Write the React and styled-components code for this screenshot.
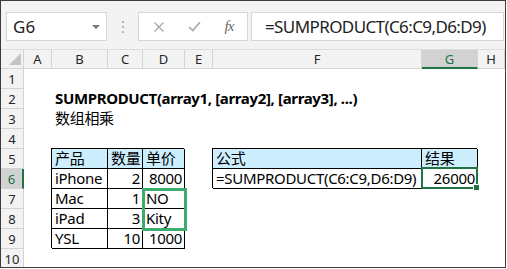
import React from "react";
import styled, { createGlobalStyle } from "styled-components";

const GlobalStyle = createGlobalStyle`
  html, body {
    margin: 0;
    padding: 0;
    background: #fff;
  }
  body {
    font-family: "Noto Sans", "Noto Sans CJK SC", sans-serif;
  }
`;

const Window = styled.div`
  width: 506px;
  height: 268px;
  box-sizing: border-box;
  border: 1px solid #3c3c3c;
  overflow: hidden;
  display: flex;
  flex-direction: column;
  background: #fff;
`;

const Toolbar = styled.div`
  height: 49px;
  flex-shrink: 0;
  box-sizing: border-box;
  background: #f3f3f3;
  border-bottom: 1px solid #dcdcdc;
  display: flex;
  align-items: flex-start;
  padding: 11px 0 0 5px;
`;

const NameBox = styled.div`
  width: 101px;
  height: 29px;
  box-sizing: border-box;
  border: 1px solid #d6d6d6;
  background: #fff;
  display: flex;
  align-items: center;
  justify-content: space-between;
  padding: 0 6px;
  font-size: 17px;
  color: #222;
`;

const Caret = styled.span`
  width: 0;
  height: 0;
  border-left: 4px solid transparent;
  border-right: 4px solid transparent;
  border-top: 4px solid #777;
`;

const Grip = styled.div`
  width: 31px;
  height: 29px;
  display: flex;
  flex-direction: column;
  align-items: center;
  justify-content: center;
  gap: 3px;
`;

const Dot = styled.span`
  width: 2px;
  height: 2px;
  background: #b4b4b4;
`;

const ButtonBox = styled.div`
  width: 110px;
  height: 29px;
  box-sizing: border-box;
  border: 1px solid #d6d6d6;
  background: #fff;
  display: grid;
  grid-template-columns: 36px 34px 1fr;
  align-items: center;
  justify-items: center;
  padding-left: 2px;
`;

const Fx = styled.span`
  font-family: "Liberation Serif", serif;
  font-style: italic;
  font-size: 15px;
  color: #6a6a6a;
  letter-spacing: -1px;
`;

const FormulaBox = styled.div`
  width: 253px;
  height: 29px;
  margin-left: 3px;
  box-sizing: border-box;
  border: 1px solid #d6d6d6;
  background: #fff;
  display: flex;
  align-items: center;
  padding-left: 13px;
  font-size: 17px;
  letter-spacing: -0.6px;
  color: #222;
  white-space: nowrap;
  overflow: hidden;
`;

const Sheet = styled.div`
  position: relative;
  display: grid;
  grid-template-columns: 23px 28px 56px 35px 42px 28px 209px 56px 1fr;
  grid-template-rows: 19px repeat(10, 20px);
`;

const HeadCell = styled.div`
  box-sizing: border-box;
  background: ${(p) => (p.$active ? "#d2d2d2" : "#f3f3f3")};
  color: ${(p) => (p.$active ? "#217346" : "#262626")};
  border-right: ${(p) => (p.$activeRow ? "2px solid #217346" : "1px solid #d4d4d4")};
  border-bottom: ${(p) => (p.$activeCol ? "2px solid #217346" : "1px solid #d4d4d4")};
  display: flex;
  align-items: center;
  justify-content: center;
  font-size: 13px;
  position: relative;
`;

const Corner = styled(HeadCell)`
  align-items: flex-end;
  justify-content: flex-end;
  padding: 0 2px 3px 0;
`;

const Cell = styled.div`
  box-sizing: border-box;
  border-right: 1px solid ${(p) => (p.$boxed ? "#000" : "transparent")};
  border-bottom: 1px solid ${(p) => (p.$boxed ? "#000" : "transparent")};
  box-shadow: ${(p) => (p.$boxed ? "-1px -1px 0 0 #000" : "none")};
  background: ${(p) => (p.$fill ? "#cdeefd" : "transparent")};
  display: flex;
  align-items: flex-end;
  justify-content: ${(p) => (p.$right ? "flex-end" : "flex-start")};
  padding: 0 ${(p) => (p.$right ? "2px" : "0")} 0 3px;
  font-size: 15px;
  letter-spacing: ${(p) => (p.$bold ? "-0.35px" : "-0.3px")};
  font-weight: ${(p) => (p.$bold ? 700 : 400)};
  line-height: 19px;
  color: #000;
  white-space: nowrap;
  overflow: visible;
`;

const Selection = styled.div`
  position: absolute;
  box-sizing: border-box;
  border: ${(p) => p.$w}px solid ${(p) => p.$color};
  pointer-events: none;
`;

const Handle = styled.span`
  position: absolute;
  right: -4px;
  bottom: -4px;
  width: 5px;
  height: 5px;
  background: #217346;
  border: 1px solid #fff;
`;

const cols = ["A", "B", "C", "D", "E", "F", "G", "H"];

const cells = {
  B2: { text: "SUMPRODUCT(array1, [array2], [array3], ...)", bold: true },
  B3: { text: "数组相乘" },
  B5: { text: "产品", boxed: true, fill: true },
  C5: { text: "数量", boxed: true, fill: true },
  D5: { text: "单价", boxed: true, fill: true },
  F5: { text: "公式", boxed: true, fill: true },
  G5: { text: "结果", boxed: true, fill: true },
  B6: { text: "iPhone", boxed: true },
  C6: { text: "2", boxed: true, right: true },
  D6: { text: "8000", boxed: true, right: true },
  F6: { text: "=SUMPRODUCT(C6:C9,D6:D9)", boxed: true },
  G6: { text: "26000", boxed: true, right: true },
  B7: { text: "Mac", boxed: true },
  C7: { text: "1", boxed: true, right: true },
  D7: { text: "NO", boxed: true },
  B8: { text: "iPad", boxed: true },
  C8: { text: "3", boxed: true, right: true },
  D8: { text: "Kity", boxed: true },
  B9: { text: "YSL", boxed: true },
  C9: { text: "10", boxed: true, right: true },
  D9: { text: "1000", boxed: true, right: true },
};

const XIcon = () => (
  <svg width="12" height="12" viewBox="0 0 12 12">
    <path d="M1.5 1.5 L10.5 10.5 M10.5 1.5 L1.5 10.5" stroke="#a8a8a8" strokeWidth="1.4" fill="none" />
  </svg>
);

const CheckIcon = () => (
  <svg width="13" height="11" viewBox="0 0 13 11">
    <path d="M1 6 L4.8 9.6 L12 1.2" stroke="#a8a8a8" strokeWidth="1.6" fill="none" />
  </svg>
);

const CornerMark = () => (
  <svg width="12" height="12" viewBox="0 0 12 12">
    <polygon points="12,0 12,12 0,12" fill="#c4c4c4" />
  </svg>
);

export default function App() {
  const rows = [];
  for (let r = 1; r <= 10; r++) {
    rows.push(
      <HeadCell key={`h${r}`} $active={r === 6} $activeRow={r === 6}>
        {r}
      </HeadCell>
    );
    cols.forEach((c) => {
      const d = cells[`${c}${r}`] || {};
      rows.push(
        <Cell key={`${c}${r}`} $boxed={d.boxed} $fill={d.fill} $right={d.right} $bold={d.bold}>
          {d.text}
        </Cell>
      );
    });
  }

  return (
    <>
      <GlobalStyle />
      <Window>
        <Toolbar>
          <NameBox>
            G6
            <Caret />
          </NameBox>
          <Grip>
            <Dot />
            <Dot />
            <Dot />
          </Grip>
          <ButtonBox>
            <XIcon />
            <CheckIcon />
            <Fx>fx</Fx>
          </ButtonBox>
          <FormulaBox>=SUMPRODUCT(C6:C9,D6:D9)</FormulaBox>
        </Toolbar>
        <Sheet>
          <Corner>
            <CornerMark />
          </Corner>
          {cols.map((c) => (
            <HeadCell key={c} $active={c === "G"} $activeCol={c === "G"}>
              {c}
            </HeadCell>
          ))}
          {rows}
          <Selection $w={3} $color="#3dab6f" style={{ left: 141, top: 138, width: 45, height: 43 }} />
          <Selection $w={2} $color="#217346" style={{ left: 420, top: 117, width: 57, height: 22 }}>
            <Handle />
          </Selection>
        </Sheet>
      </Window>
    </>
  );
}
